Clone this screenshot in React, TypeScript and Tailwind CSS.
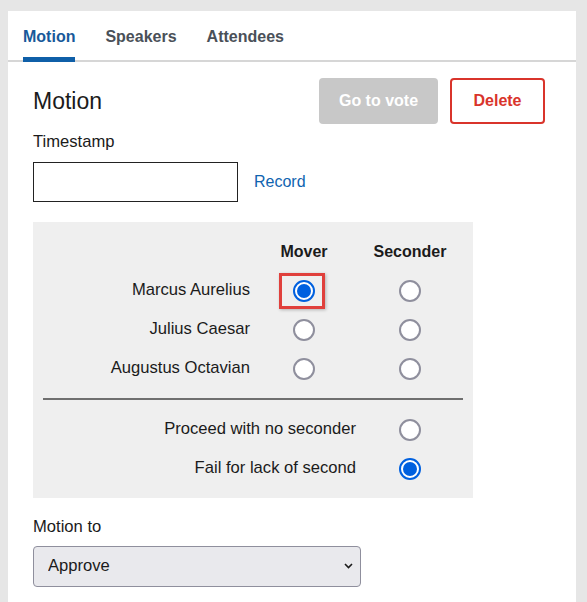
import React, { useState } from "react";

type Role = "mover" | "seconder";

const people = ["Marcus Aurelius", "Julius Caesar", "Augustus Octavian"];

const Radio: React.FC<{ checked: boolean; onClick?: () => void; children?: React.ReactNode }> = ({
  checked,
  onClick,
  children,
}) => (
  <span
    onClick={onClick}
    className={
      checked
        ? "relative inline-flex h-[22px] w-[22px] cursor-pointer items-center justify-center rounded-full border-2 border-[#0060df] bg-white"
        : "relative inline-flex h-[22px] w-[22px] cursor-pointer items-center justify-center rounded-full border-2 border-[#8f8f9d] bg-white"
    }
  >
    {checked && <span className="h-[14px] w-[14px] rounded-full bg-[#0060df]" />}
    {children}
  </span>
);

export default function App() {
  const [mover, setMover] = useState(0);
  const [seconder, setSeconder] = useState<number | null>(null);
  const [noSecond, setNoSecond] = useState<"proceed" | "fail">("fail");
  const [motionTo, setMotionTo] = useState("Approve");

  const pick = (role: Role, i: number) => (role === "mover" ? setMover(i) : setSeconder(i));

  return (
    <div
      className="h-[602px] overflow-hidden bg-[#e6e6e6] pl-2 pr-[11px] pt-[11px] text-[16.6px] text-[#1b1b1b]"
      style={{ fontFamily: '"Liberation Sans", Arial, sans-serif' }}
    >
      <div className="h-[620px] bg-white">
        {/* tabs */}
        <div className="flex gap-[30px] border-b-2 border-[#d6d6d6] pl-[15px]">
          <div className="-mb-[2px] border-b-[5px] border-[#0f5fa8] pb-[10px] pt-[16px] text-[16px] font-bold leading-5 text-[#17599a]">
            Motion
          </div>
          <div className="-mb-[2px] border-b-[5px] border-transparent pb-[10px] pt-[16px] text-[16px] font-bold leading-5 text-[#4a5058]">
            Speakers
          </div>
          <div className="-mb-[2px] border-b-[5px] border-transparent pb-[10px] pt-[16px] text-[16px] font-bold leading-5 text-[#4a5058]">
            Attendees
          </div>
        </div>

        <div className="pl-[25px] pr-[31px]">
          {/* heading */}
          <div className="mt-[16px] flex h-[46px] items-center justify-between">
            <h2 className="text-[23px] leading-7">Motion</h2>
            <div className="flex gap-3">
              <button className="h-[46px] w-[119px] rounded-[4px] bg-[#c8c8c8] text-[16px] font-bold text-white">
                Go to vote
              </button>
              <button className="h-[46px] w-[95px] rounded-[4px] border-2 border-[#d9342b] bg-white text-[16px] font-bold text-[#d9342b]">
                Delete
              </button>
            </div>
          </div>

          {/* timestamp */}
          <div className="mt-2 leading-5">Timestamp</div>
          <div className="mt-[10px] flex items-center">
            <input className="h-10 w-[205px] border-[1.5px] border-[#222] px-2 outline-none" />
            <a className="ml-4 cursor-pointer text-[16px] text-[#1064b0]">Record</a>
          </div>

          {/* mover / seconder */}
          <div className="mt-5 w-[440px] bg-[#efefef] pb-[10px] pt-[10px]">
            <div className="grid grid-cols-[217px_108px_104px]">
              <div className="h-[39px]" />
              <div className="flex h-[39px] items-center justify-center text-[16px] font-bold">Mover</div>
              <div className="flex h-[39px] items-center justify-center text-[16px] font-bold">Seconder</div>
              {people.map((p, i) => (
                <React.Fragment key={p}>
                  <div className="flex h-[39px] items-center justify-end">{p}</div>
                  <div className="flex h-[39px] items-center justify-center">
                    <Radio checked={mover === i} onClick={() => pick("mover", i)}>
                      {i === 0 && (
                        <span className="pointer-events-none absolute -bottom-[9px] -left-[16px] -right-[12px] -top-[9px] border-[3px] border-[#e0403c] shadow-[1px_1px_3px_rgba(0,0,0,0.25)]" />
                      )}
                    </Radio>
                  </div>
                  <div className="flex h-[39px] items-center justify-center">
                    <Radio checked={seconder === i} onClick={() => pick("seconder", i)} />
                  </div>
                </React.Fragment>
              ))}
            </div>

            <div className="mx-[10px] my-[10px] h-[2px] bg-[#6f6f6f]" />

            <div className="grid grid-cols-[217px_108px_104px]">
              <div className="col-span-2 flex h-[39px] items-center justify-end pr-[2px]">
                Proceed with no seconder
              </div>
              <div className="flex h-[39px] items-center justify-center">
                <Radio checked={noSecond === "proceed"} onClick={() => setNoSecond("proceed")} />
              </div>
              <div className="col-span-2 flex h-[39px] items-center justify-end pr-[2px]">
                Fail for lack of second
              </div>
              <div className="flex h-[39px] items-center justify-center">
                <Radio checked={noSecond === "fail"} onClick={() => setNoSecond("fail")} />
              </div>
            </div>
          </div>

          {/* motion to */}
          <div className="mt-[19px] leading-5">Motion to</div>
          <div className="relative mt-[9px] w-[328px]">
            <select
              value={motionTo}
              onChange={(e) => setMotionTo(e.target.value)}
              className="h-[41px] w-full appearance-none rounded-[4px] border border-[#8f8f9d] bg-[#e9e9ed] pl-[14px] text-[16.6px] outline-none"
            >
              <option>Approve</option>
              <option>Deny</option>
              <option>Table</option>
            </select>
            <svg
              className="pointer-events-none absolute right-[8px] top-[17px]"
              width="9"
              height="6"
              viewBox="0 0 9 6"
              fill="none"
            >
              <path d="M1 1l3.5 3.5L8 1" stroke="#1b1b1b" strokeWidth="1.6" />
            </svg>
          </div>
        </div>
      </div>
    </div>
  );
}
